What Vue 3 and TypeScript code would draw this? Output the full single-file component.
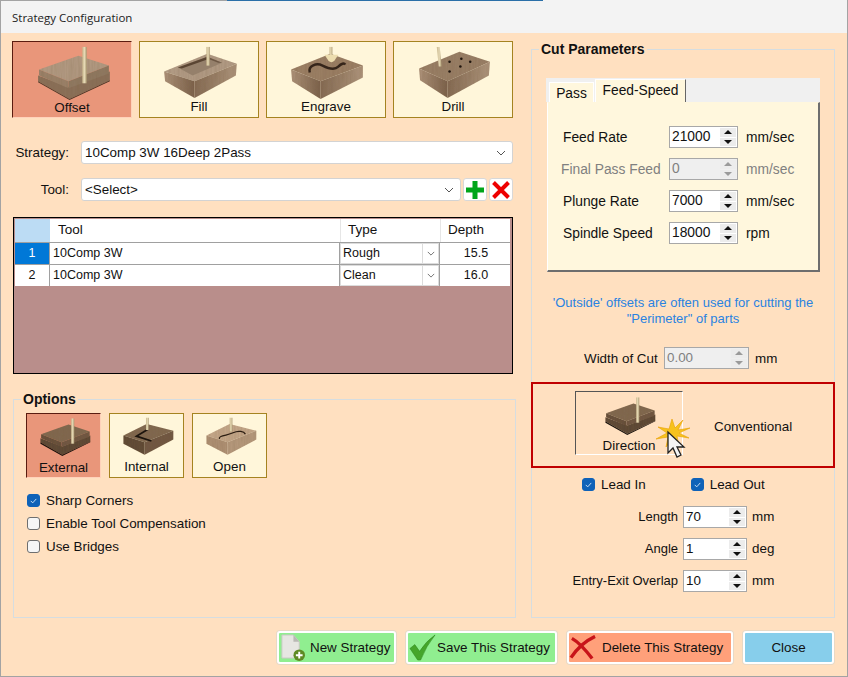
<template>
  <div class="window">
    <!-- shared artwork for the cutting tiles -->
    <svg class="defs" width="0" height="0">
      <defs>
        <filter id="grain" x="0" y="0" width="100%" height="100%">
          <feTurbulence type="fractalNoise" baseFrequency="0.5 0.05" numOctaves="2" seed="4" />
          <feColorMatrix values="0 0 0 0 0.2  0 0 0 0 0.12  0 0 0 0 0.05  0 0 0 0.4 -0.12" />
          <feComposite in2="SourceAlpha" operator="in" result="lines" />
          <feMerge>
            <feMergeNode in="SourceGraphic" />
            <feMergeNode in="lines" />
          </feMerge>
        </filter>
        <linearGradient id="bit" x1="0" x2="1" y1="0" y2="0">
          <stop offset="0" stop-color="#c9b78d" />
          <stop offset="0.5" stop-color="#e6d9b5" />
          <stop offset="1" stop-color="#a8966e" />
        </linearGradient>
        <linearGradient id="sideL" x1="0" x2="1" y1="0" y2="0">
          <stop offset="0" stop-color="#ac9178" />
          <stop offset="1" stop-color="#7a604a" />
        </linearGradient>
        <linearGradient id="sideR" x1="0" x2="1" y1="0" y2="0">
          <stop offset="0" stop-color="#846a53" />
          <stop offset="1" stop-color="#ad947b" />
        </linearGradient>
      </defs>
      <symbol id="offset" viewBox="0 0 119 60">
        <g filter="url(#grain)">
          <polygon points="25,34 57,46 98,30 98,39 57,58 25,40" fill="#8a7059" />
          <polygon points="26,28 66,14 97,24 56,40" fill="#b09880" />
          <polygon points="26,28 56,40 56,47 26,34" fill="#9a8068" />
          <polygon points="56,40 97,24 97,32 56,47" fill="#8f7860" />
        </g>
        <polygon points="57,58 25,40 25,41 57,59 98,40 98,39" fill="#4a3626" />
        <rect x="70" y="5" width="4.500" height="37" fill="url(#bit)" />
      </symbol>
      <symbol id="external" viewBox="0 0 119 60">
        <g filter="url(#grain)">
          <polygon points="25,34 57,46 98,30 98,39 57,58 25,40" fill="#5c4634" />
          <polygon points="26,28 66,14 97,24 56,40" fill="#80684f" />
          <polygon points="26,28 56,40 56,47 26,34" fill="#664f3b" />
          <polygon points="56,40 97,24 97,32 56,47" fill="#6f5742" />
        </g>
        <polygon points="57,58 25,40 25,42 57,60 98,40 98,39" fill="#1c140d" />
        <rect x="70" y="5" width="4.500" height="37" fill="url(#bit)" />
      </symbol>
      <symbol id="fill" viewBox="0 0 119 60">
        <g filter="url(#grain)">
          <polygon points="24,30 68,12 98,22 55,40" fill="#b09a83" />
          <polygon points="24,30 55,40 55,57 25,40" fill="url(#sideL)" />
          <polygon points="55,40 98,22 97,34 55,57" fill="url(#sideR)" />
        </g>
        <polygon points="38,26 68,15 83,21 53,34" fill="#95806b" />
        <polygon points="38,26 68,15 70,17 42,27" fill="#5a4533" />
        <polygon points="68,15 83,21 79,21 66,16" fill="#6d5744" />
        <rect x="67" y="5" width="3.500" height="19" fill="url(#bit)" />
      </symbol>
      <symbol id="engrave" viewBox="0 0 119 60">
        <g filter="url(#grain)">
          <polygon points="24,28 64,12 97,24 54,40" fill="#9a7e64" />
          <polygon points="24,28 54,40 54,58 25,40" fill="url(#sideL)" />
          <polygon points="54,40 97,24 97,36 54,58" fill="url(#sideR)" />
        </g>
        <path d="M43 31 C41 24 50 21 56 24 C62 27 68 29 72 25 C75 22 78 21 79 23" fill="none" stroke="#35251a" stroke-width="2.500" />
        <rect x="63" y="5" width="3" height="9" fill="url(#bit)" />
        <path d="M58 13 H72 L68 19 Q65 22 62 19 Z" fill="#ecdcae" />
      </symbol>
      <symbol id="drill" viewBox="0 0 119 60">
        <g filter="url(#grain)">
          <polygon points="25,27 66,10 97,20 54,40" fill="#987e65" />
          <polygon points="25,27 54,40 54,57 26,39" fill="url(#sideL)" />
          <polygon points="54,40 97,20 96,34 54,57" fill="url(#sideR)" />
        </g>
        <g fill="#20160e">
          <circle cx="56" cy="20" r="1.300" /><circle cx="68" cy="17" r="1.300" /><circle cx="77" cy="20" r="1.300" />
          <circle cx="67" cy="25" r="1.300" /><circle cx="56" cy="30" r="1.300" />
        </g>
        <polygon points="43,5 46,5 48,25 45,25" fill="url(#bit)" />
      </symbol>
      <symbol id="internal" viewBox="0 0 119 60">
        <g filter="url(#grain)">
          <polygon points="25,30 59,13 98,23 56,40" fill="#80684f" />
          <polygon points="25,30 56,40 56,58 25,42" fill="#5f4936" />
          <polygon points="56,40 98,23 98,36 56,58" fill="#6f5742" />
        </g>
        <path d="M61 21 L44 31 L66 38" fill="none" stroke="#1c140d" stroke-width="2.500" />
        <rect x="58" y="4" width="4" height="18" fill="url(#bit)" />
      </symbol>
      <symbol id="open" viewBox="0 0 119 60">
        <g filter="url(#grain)">
          <polygon points="25,30 59,13 98,23 56,40" fill="#c2a587" />
          <polygon points="25,30 56,40 56,58 25,42" fill="#ad8f72" />
          <polygon points="56,40 98,23 98,36 56,58" fill="#b4977a" />
        </g>
        <path d="M44 35 C42 30 56 30 64 26 C72 22 80 24 82 28" fill="none" stroke="#2b1d12" stroke-width="1.800" />
        <rect x="59" y="4" width="4" height="20" fill="url(#bit)" />
      </symbol>
    </svg>

    <header class="titlebar">Strategy Configuration</header>

    <main class="content">
      <section class="left">
        <div class="tiles">
          <button v-for="t in strategyTiles" :key="t.label" class="tile big" :class="{ selected: t.selected }">
            <svg class="art"><use :href="'#' + t.art" /></svg>
            <span>{{ t.label }}</span>
          </button>
        </div>

        <div class="form-row first">
          <label>Strategy:</label>
          <div class="select">10Comp 3W 16Deep 2Pass<svg class="chev" viewBox="0 0 10 6"><path d="M1 1l4 4 4-4" /></svg></div>
        </div>
        <div class="form-row second">
          <label>Tool:</label>
          <div class="select">&lt;Select&gt;<svg class="chev" viewBox="0 0 10 6"><path d="M1 1l4 4 4-4" /></svg></div>
          <button class="square">
            <svg viewBox="0 0 20 20"><path d="M7.500 1h5v6.500h6.500v5h-6.500v6.500h-5v-6.500h-6.500v-5h6.500z" fill="#00a51a" /></svg>
          </button>
          <button class="square">
            <svg viewBox="0 0 20 20"><path d="M2.500 2.500l15 15M17.500 2.500l-15 15" stroke="#ee0000" stroke-width="4" /></svg>
          </button>
        </div>

        <div class="grid">
          <div class="grid-row head">
            <div class="corner"></div>
            <div class="tool-h">Tool</div>
            <div class="type-h">Type</div>
            <div class="depth-h">Depth</div>
          </div>
          <div v-for="(r, i) in toolRows" :key="i" class="grid-row body">
            <div class="rowhead" :class="{ current: i === 0 }">{{ i + 1 }}</div>
            <div class="tool-c">{{ r.tool }}</div>
            <div class="type-c">
              <span class="combo">{{ r.type }}</span>
              <span class="combo-btn"><svg class="chev small" viewBox="0 0 10 6"><path d="M1 1l4 4 4-4" /></svg></span>
            </div>
            <div class="depth-c">{{ r.depth }}</div>
          </div>
        </div>

        <fieldset class="group options">
          <legend>Options</legend>
          <div class="tiles small-tiles">
            <button v-for="t in optionTiles" :key="t.label" class="tile small" :class="{ selected: t.selected }">
              <svg class="art"><use :href="'#' + t.art" /></svg>
              <span>{{ t.label }}</span>
            </button>
          </div>
          <div class="checks">
            <div v-for="c in optionChecks" :key="c.label" class="check-row">
              <span class="check" :class="{ on: c.on }">
                <svg v-if="c.on" viewBox="0 0 14 14"><path d="M3.500 7.500l2.500 2.500 4.500-5" /></svg>
              </span>
              {{ c.label }}
            </div>
          </div>
        </fieldset>
      </section>

      <fieldset class="group params">
        <legend>Cut Parameters</legend>

        <div class="tabs">
          <div class="tab-strip">
            <div class="tab">Pass</div>
            <div class="tab active">Feed-Speed</div>
          </div>
          <div class="tab-panel">
            <div v-for="r in feedRows" :key="r.label" class="feed-row" :class="{ disabled: r.disabled }">
              <span class="feed-label">{{ r.label }}</span>
              <div class="spin" :class="{ off: r.disabled }">
                <span class="spin-value">{{ r.value }}</span>
                <span class="spin-btns"><i class="up"></i><i class="down"></i></span>
              </div>
              <span class="feed-unit">{{ r.unit }}</span>
            </div>
          </div>
        </div>

        <p class="note">'Outside' offsets are often used for cutting the<br />"Perimeter" of parts</p>

        <div class="width-row">
          <span class="width-label">Width of Cut</span>
          <div class="spin off wide">
            <span class="spin-value">0.00</span>
            <span class="spin-btns"><i class="up"></i><i class="down"></i></span>
          </div>
          <span class="width-unit">mm</span>
        </div>

        <div class="direction-box">
          <button class="direction">
            <svg class="art"><use href="#external" /></svg>
            <span>Direction</span>
            <!-- click highlight and pointer sit over the button -->
            <svg class="pointer" viewBox="0 0 36 42">
              <polygon points="17,0 20,9 28,1 23,11 35,9 24,14 34,19 22,17 24,27 18,19 11,28 13,18 1,20 12,14 3,8 14,10" fill="#f7c21d" stroke="#e79f00" stroke-width="0.6" />
              <path d="M13 13 L13 34 L18 29 L22 38 L26 36 L22 28 L29 28 Z" fill="#f4f4f4" stroke="#222" stroke-width="1.300" />
            </svg>
          </button>
          <span class="direction-value">Conventional</span>
        </div>

        <div class="lead-checks">
          <div class="check-row"><span class="check on"><svg viewBox="0 0 14 14"><path d="M3.500 7.500l2.500 2.500 4.500-5" /></svg></span>Lead In</div>
          <div class="check-row"><span class="check on"><svg viewBox="0 0 14 14"><path d="M3.500 7.500l2.500 2.500 4.500-5" /></svg></span>Lead Out</div>
        </div>

        <div class="lead-rows">
          <div v-for="r in leadRows" :key="r.label" class="lead-row">
            <span class="lead-label">{{ r.label }}</span>
            <div class="spin lead">
              <span class="spin-value">{{ r.value }}</span>
              <span class="spin-btns"><i class="up"></i><i class="down"></i></span>
            </div>
            <span class="lead-unit">{{ r.unit }}</span>
          </div>
        </div>
      </fieldset>
    </main>

    <footer class="footer">
      <button class="action green new">
        <svg viewBox="0 0 26 28">
          <path d="M2 1h12l6 7v17H2z" fill="#e6e6e2" stroke="#c9c9c4" />
          <path d="M14 1v7h6z" fill="#b9b9b4" />
          <circle cx="20" cy="22" r="6" fill="#5e8a23" />
          <path d="M20 18.500v7M16.500 22h7" stroke="#fff" stroke-width="2" />
        </svg>
        New Strategy
      </button>
      <button class="action green save">
        <svg viewBox="0 0 28 28"><path d="M1 15 L6 11 L11 18 Q17 8 27 1 Q18 12 12 27 L9 27 Z" fill="#45a52a" stroke="#2f8a1f" stroke-width="0.6" /></svg>
        Save This Strategy
      </button>
      <button class="action salmon delete">
        <svg viewBox="0 0 28 26"><path d="M3 3 Q12 8 24 24 M27 1 Q12 8 2 23" fill="none" stroke="#c8141a" stroke-width="3.500" /></svg>
        Delete This Strategy
      </button>
      <button class="action sky close">Close</button>
    </footer>
  </div>
</template>

<script setup lang="ts">
interface Tile {
  label: string
  art: string
  selected?: boolean
}

interface SpinRow {
  label: string
  value: string
  unit: string
  disabled?: boolean
}

const strategyTiles: Tile[] = [
  { label: 'Offset', art: 'offset', selected: true },
  { label: 'Fill', art: 'fill' },
  { label: 'Engrave', art: 'engrave' },
  { label: 'Drill', art: 'drill' },
]

const optionTiles: Tile[] = [
  { label: 'External', art: 'external', selected: true },
  { label: 'Internal', art: 'internal' },
  { label: 'Open', art: 'open' },
]

const toolRows = [
  { tool: '10Comp 3W', type: 'Rough', depth: '15.5' },
  { tool: '10Comp 3W', type: 'Clean', depth: '16.0' },
]

const optionChecks = [
  { label: 'Sharp Corners', on: true },
  { label: 'Enable Tool Compensation', on: false },
  { label: 'Use Bridges', on: false },
]

const feedRows: SpinRow[] = [
  { label: 'Feed Rate', value: '21000', unit: 'mm/sec' },
  { label: 'Final Pass Feed', value: '0', unit: 'mm/sec', disabled: true },
  { label: 'Plunge Rate', value: '7000', unit: 'mm/sec' },
  { label: 'Spindle Speed', value: '18000', unit: 'rpm' },
]

const leadRows: SpinRow[] = [
  { label: 'Length', value: '70', unit: 'mm' },
  { label: 'Angle', value: '1', unit: 'deg' },
  { label: 'Entry-Exit Overlap', value: '10', unit: 'mm' },
]
</script>

<style>
html,
body {
  margin: 0;
  background: #ffe0c0;
}
</style>

<style scoped>
.window {
  width: 848px;
  height: 677px;
  box-sizing: border-box;
  display: flex;
  flex-direction: column;
  background: #ffe0c0;
  border: 1px solid #a3a3a3;
  border-top: 0;
  font-family: 'Liberation Sans', Arial, sans-serif;
  font-size: 13.4px;
  color: #111;
}

button {
  font: inherit;
  color: inherit;
  padding: 0;
  cursor: default;
}

.defs {
  display: block;
  flex: none;
}

.titlebar {
  height: 33px;
  box-sizing: border-box;
  padding-left: 11px;
  line-height: 34px;
  font-family: 'Open Sans', sans-serif;
  font-size: 11.5px;
  color: #222;
  background: #f3f3f3;
  border-top: 1px solid;
  border-image: linear-gradient(90deg, #a3a3a3 226px, #2a6fa8 226px, #2a6fa8 542px, #f3f3f3 542px) 1;
}

.content {
  height: 585px;
  box-sizing: border-box;
  padding: 8px 0 0 11px;
  display: grid;
  grid-template-columns: 505px 304px;
  column-gap: 14px;
}

.left {
  display: flex;
  flex-direction: column;
}

.tiles {
  display: flex;
  gap: 7px;
}

.tile {
  box-sizing: border-box;
  display: flex;
  flex-direction: column;
  align-items: center;
  background: #fff6da;
  border: 1px solid #a58320;
}

.tile.selected {
  background: #e9967a;
  border-color: #5a1c10 #ffd2bb #ffd2bb #5a1c10;
}

.tile.big {
  width: 120px;
  height: 77px;
}

.tile.big .art {
  width: 118px;
  height: 59px;
  flex: none;
}

.tile.big span {
  line-height: 16px;
  margin-top: -2px;
}

.tile.big.selected span {
  margin-top: -1px;
}

.tile.small {
  width: 75px;
  height: 65px;
}

.small-tiles {
  gap: 8px;
}

.tile.small .art {
  width: 82px;
  height: 41px;
  flex: none;
  margin-top: 1px;
}

.tile.small span {
  line-height: 16px;
  margin-top: 3px;
}

.tile.small.selected span {
  margin-top: 4px;
}

.form-row {
  display: flex;
  align-items: center;
  height: 23px;
  margin-right: 4px;
}

.form-row.first {
  margin-top: 23px;
}

.form-row.second {
  margin-top: 14px;
  margin-bottom: 16px;
}

.form-row label {
  width: 57px;
  flex: none;
  text-align: right;
  margin-right: 12px;
}

.select {
  flex: 1;
  height: 23px;
  box-sizing: border-box;
  display: flex;
  align-items: center;
  justify-content: space-between;
  padding: 0 6px 0 3px;
  background: #fff;
  border: 1px solid #d3d3d3;
  border-radius: 3px;
}

.chev {
  width: 10px;
  height: 6px;
  fill: none;
  stroke: #555;
  stroke-width: 1;
}

.square {
  width: 24px;
  height: 23px;
  margin-left: 2px;
  flex: none;
  display: flex;
  align-items: center;
  justify-content: center;
  background: #fff;
  border: 1px solid #d8d8d8;
  border-radius: 3px;
}

.square svg {
  width: 20px;
  height: 20px;
}

.grid {
  margin-left: 1px;
  width: 500px;
  height: 157px;
  box-sizing: border-box;
  flex: none;
  background: #b98e8b;
  border: 1px solid #000;
  padding: 1px 2px 0 1px;
  font-size: 12.5px;
}

.grid-row {
  display: grid;
  grid-template-columns: 35px 290px 100px 70px;
  background: #fff;
}

.grid-row.head {
  height: 23px;
  line-height: 22px;
  font-size: 13.5px;
}

.grid-row.body {
  height: 22px;
  box-sizing: border-box;
  line-height: 20px;
  border-top: 1px solid #a0a0a0;
}

.corner {
  background: #bcdcf4;
}

.tool-h {
  padding-left: 8px;
}

.type-h {
  padding-left: 7px;
  border-left: 1px solid #e6e6e6;
}

.depth-h {
  padding-left: 7px;
  border-left: 1px solid #e6e6e6;
}

.rowhead {
  text-align: center;
  border-right: 1px solid #a0a0a0;
}

.rowhead.current {
  background: #0078d7;
  color: #fff;
}

.tool-c {
  padding-left: 3px;
  border-right: 1px solid #a0a0a0;
}

.type-c {
  display: flex;
  border-right: 1px solid #a0a0a0;
  box-shadow: inset 0 0 0 1px #dcdcdc;
}

.combo {
  flex: 1;
  padding-left: 3px;
}

.combo-btn {
  width: 16px;
  display: flex;
  align-items: center;
  justify-content: center;
  border-left: 1px solid #dcdcdc;
}

.chev.small {
  width: 8px;
  height: 5px;
}

.depth-c {
  text-align: center;
  padding-left: 2px;
}

.group {
  margin: 0;
  padding: 0;
  min-width: 0;
  border: 1px solid #d6dde0;
}

.group legend {
  padding: 0 2px;
  margin-left: 7px;
  font-size: 14px;
  font-weight: 700;
  line-height: 16px;
}

.options {
  margin: 17px 0 0 1px;
  width: 503px;
  height: 227px;
  box-sizing: border-box;
  padding: 6px 0 0 12px;
}

.options legend {
  margin-left: -5px;
}

.checks {
  margin: 11px 0 0 1px;
}

.check-row {
  display: flex;
  align-items: center;
  height: 23px;
  gap: 6px;
}

.check {
  width: 13px;
  height: 13px;
  box-sizing: border-box;
  flex: none;
  background: #f6f6f6;
  border: 1px solid #6f6f6f;
  border-radius: 3px;
}

.check.on {
  background: #0f62b8;
  border-color: #0f62b8;
}

.check svg {
  display: block;
  width: 11px;
  height: 11px;
  fill: none;
  stroke: #cfe3f7;
  stroke-width: 1.200;
}

.params {
  box-sizing: border-box;
  height: 577px;
}

.tabs {
  margin: 21px 0 0 14px;
  width: 274px;
  font-size: 13.8px;
}

.tab-strip {
  height: 24px;
  display: flex;
  align-items: flex-end;
  padding-left: 3px;
  gap: 1px;
  background: #f0f0f0;
}

.tab {
  height: 20px;
  width: 45px;
  box-sizing: border-box;
  text-align: center;
  line-height: 21px;
  background: #fff7dd;
  border: 1px solid #fff;
  border-bottom: 0;
}

.tab.active {
  height: 23px;
  width: 91px;
  line-height: 21px;
  border-right: 1px solid #666;
}

.tab-panel {
  height: 170px;
  box-sizing: border-box;
  padding: 23px 0 0 13px;
  margin-left: 1px;
  width: 273px;
  background: #fff7dd;
  border-top: 1px solid #fff7dd;
  border-left: 1px solid #fff;
  border-right: 2px solid #6e6e6e;
  border-bottom: 2px solid #6e6e6e;
  display: flex;
  flex-direction: column;
  gap: 10px;
}

.feed-row {
  display: flex;
  align-items: center;
  height: 22px;
}

.feed-label {
  width: 106px;
  padding-left: 2px;
  flex: none;
}

.feed-row.disabled {
  color: #808080;
}

.feed-row.disabled .feed-label {
  padding-left: 0;
  width: 108px;
}

.feed-unit {
  margin-left: 8px;
}

.spin {
  width: 69px;
  height: 22px;
  box-sizing: border-box;
  flex: none;
  display: flex;
  background: #fff;
  border: 1px solid #a8a8a8;
}

.spin.off {
  background: #efefef;
  color: #808080;
}

.spin.wide {
  width: 85px;
}

.spin.lead {
  width: 64px;
}

.spin-value {
  flex: 1;
  padding-left: 2px;
  line-height: 19px;
}

.spin-btns {
  width: 16px;
  margin: 1px 1px 1px 0;
  display: flex;
  flex-direction: column;
  gap: 1px;
}

.spin-btns i {
  flex: 1;
  background: #ececec;
  display: flex;
  align-items: center;
  justify-content: center;
}

.spin-btns i::before {
  content: '';
  border-left: 4px solid transparent;
  border-right: 4px solid transparent;
}

.spin-btns .up::before {
  border-bottom: 4px solid #111;
}

.spin-btns .down::before {
  border-top: 4px solid #111;
}

.spin.off .up::before {
  border-bottom-color: #9a9a9a;
}

.spin.off .down::before {
  border-top-color: #9a9a9a;
}

.note {
  margin: 23px 0 0;
  text-align: center;
  line-height: 16px;
  font-size: 13px;
  color: #2a83e0;
}

.width-row {
  margin: 20px 0 0 52px;
  height: 22px;
  display: flex;
  align-items: center;
}

.width-label {
  width: 80px;
  flex: none;
}

.width-unit {
  margin-left: 6px;
}

.direction-box {
  margin: 13px -1px 0;
  height: 86px;
  box-sizing: border-box;
  border: 2px solid #c00000;
  display: flex;
  align-items: flex-start;
  padding: 7px 0 0 42px;
  gap: 31px;
}

.direction {
  position: relative;
  width: 108px;
  height: 64px;
  box-sizing: border-box;
  display: flex;
  flex-direction: column;
  align-items: center;
  background: transparent;
  border: 1px solid;
  border-color: #555 #fff #fff #555;
}

.direction .art {
  width: 82px;
  height: 41px;
  flex: none;
  margin-top: 2px;
}

.direction span {
  line-height: 16px;
  margin-top: 3px;
}

.direction-value {
  margin-top: 28px;
}

.pointer {
  position: absolute;
  left: 79px;
  top: 27px;
  width: 36px;
  height: 42px;
}

.lead-checks {
  margin: 5px 0 0 50px;
  display: flex;
  gap: 45px;
}

.lead-rows {
  margin-top: 10px;
  display: flex;
  flex-direction: column;
  gap: 10px;
}

.lead-row {
  display: flex;
  align-items: center;
  height: 22px;
  gap: 5px;
}

.lead-label {
  width: 146px;
  text-align: right;
  font-size: 13px;
  padding-bottom: 2px;
}

.lead-unit {
  padding-bottom: 2px;
}

.footer {
  margin-top: 13px;
  padding-right: 13px;
  display: flex;
  justify-content: flex-end;
  gap: 10px;
}

.action {
  height: 33px;
  box-sizing: border-box;
  display: flex;
  align-items: center;
  white-space: nowrap;
  border: 2px solid #fff;
  border-radius: 3px;
  box-shadow: 0 0 0 1px #e8d9c6;
}

.action svg {
  flex: none;
}

.green {
  background: #90ee90;
}

.salmon {
  background: #ffa07a;
}

.sky {
  background: #87ceeb;
  justify-content: center;
}

.new {
  width: 119px;
  padding-left: 1px;
  gap: 5px;
}

.new svg {
  width: 25px;
  height: 27px;
}

.save {
  width: 151px;
  padding-left: 1px;
  gap: 1px;
}

.save svg {
  width: 27px;
  height: 27px;
}

.delete {
  width: 166px;
  padding-left: 0;
  gap: 6px;
}

.delete svg {
  width: 27px;
  height: 26px;
}

.close {
  width: 91px;
}
</style>
